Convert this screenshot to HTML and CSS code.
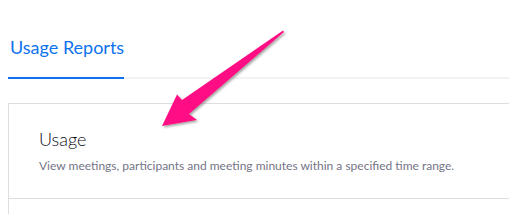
FILE: index.html
```html
<!DOCTYPE html>
<html>
<head>
<meta charset="utf-8">
<link rel="stylesheet" href="styles.css">
</head>
<body>
<div class="page">
  <div class="tabs">
    <div class="tab active">Usage Reports</div>
  </div>
  <div class="list">
    <div class="item">
      <div class="item-title">Usage</div>
      <div class="item-desc">View meetings, participants and meeting minutes within a specified time range.</div>
    </div>
    <div class="item item-next"></div>
  </div>
  <svg class="arrow" width="509" height="214" viewBox="0 0 509 214" xmlns="http://www.w3.org/2000/svg">
    <defs>
      <filter id="sh" x="-20%" y="-20%" width="140%" height="140%">
        <feDropShadow dx="1.5" dy="1.5" stdDeviation="0.8" flood-color="#555" flood-opacity="0.55"/>
      </filter>
    </defs>
    <polygon filter="url(#sh)" fill="#ff0a84" points="283,30.5 182,100 177,94.5 162,126 197,120 189,114 284,32"/>
  </svg>
</div>
</body>
</html>
```
FILE: styles.css
```css
html, body {
  margin: 0;
  padding: 0;
  background: #ffffff;
  overflow: hidden;
}
.page {
  position: relative;
  width: 509px;
  height: 214px;
  overflow: hidden;
  font-family: Lato, "Liberation Sans", sans-serif;
}
.tabs {
  display: flex;
  margin-left: 8px;
  padding-top: 36px;
  border-bottom: 2px solid #f2f2f2;
}
.tab {
  font-size: 18px;
  line-height: 22px;
  padding: 0 2px 19px 2px;
  width: 112px;
  white-space: nowrap;
}
.tab.active {
  color: #0e72ed;
  border-bottom: 2px solid #0e72ed;
  margin-bottom: -2px;
}
.list {
  margin: 24px -20px 0 8px;
  border-top: 1px solid #dedede;
  border-left: 1px solid #dedede;
}
.item {
  height: 95px;
  border-bottom: 1px solid #dedede;
  padding-left: 30px;
  box-sizing: border-box;
  padding-top: 24px;
}
.item-next {
  height: 40px;
  border-bottom: none;
}
.item-title {
  font-size: 18px;
  line-height: 22px;
  font-weight: 300;
  color: #0a0a14;
}
.item-desc {
  margin-top: 8px;
  font-size: 12px;
  line-height: 15px;
  color: #747487;
}
.arrow {
  position: absolute;
  left: 0;
  top: 0;
  pointer-events: none;
}
```
